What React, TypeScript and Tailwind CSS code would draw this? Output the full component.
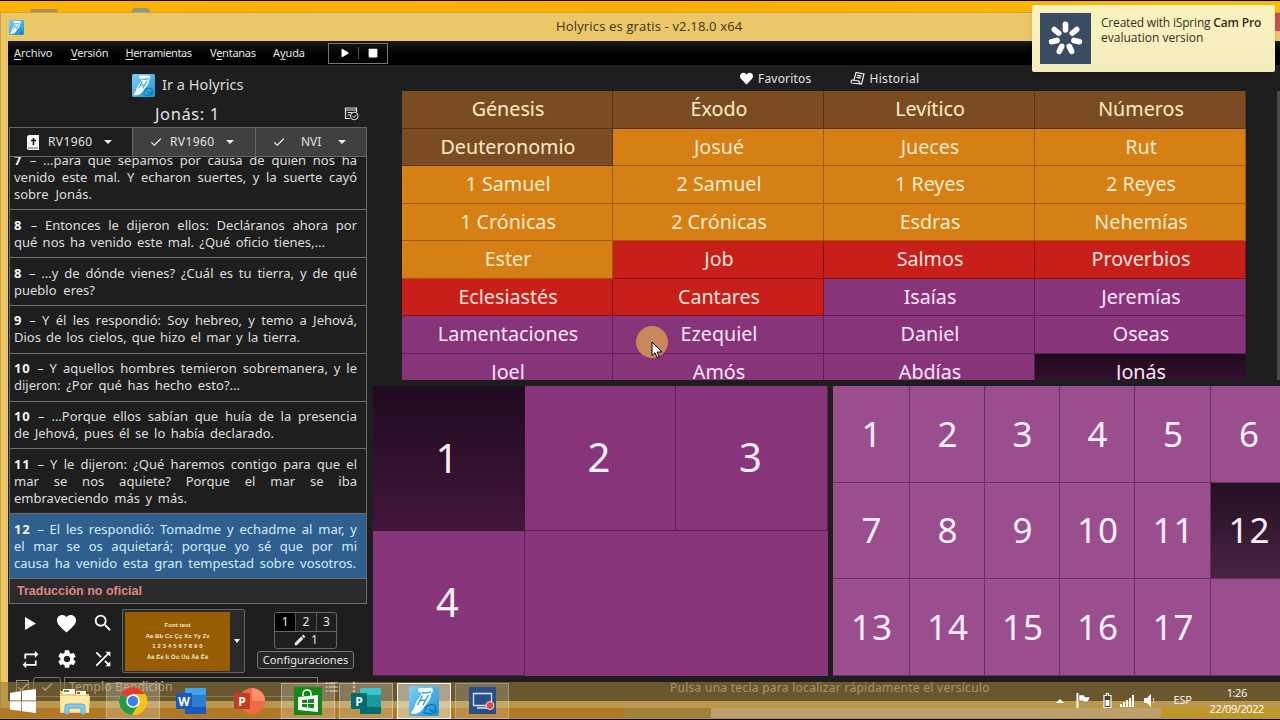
import type { ReactNode } from "react";
import { FaHeart, FaPlay, FaStop } from "react-icons/fa";
import {
  MdCheck,
  MdEdit,
  MdFavorite,
  MdFormatListBulleted,
  MdMoreVert,
  MdRepeat,
  MdSearch,
  MdSettings,
  MdShuffle,
} from "react-icons/md";

type Line = [text: string, width: number];
type Verse = { n: string; lines: Line[]; active?: boolean };

const verses: Verse[] = [
  {
    n: "7",
    lines: [
      ["– ...para que sepamos por causa de quien nos ha", 343],
      ["venido este mal. Y echaron suertes, y la suerte cayó", 343],
      ["sobre Jonás.", 78],
    ],
  },
  {
    n: "8",
    lines: [
      ["– Entonces le dijeron ellos: Decláranos ahora por", 343],
      ["qué nos ha venido este mal. ¿Qué oficio tienes,...", 311],
    ],
  },
  {
    n: "8",
    lines: [
      ["– ...y de dónde vienes? ¿Cuál es tu tierra, y de qué", 343],
      ["pueblo eres?", 81],
    ],
  },
  {
    n: "9",
    lines: [
      ["– Y él les respondió: Soy hebreo, y temo a Jehová,", 343],
      ["Dios de los cielos, que hizo el mar y la tierra.", 286],
    ],
  },
  {
    n: "10",
    lines: [
      ["– Y aquellos hombres temieron sobremanera, y le", 343],
      ["dijeron: ¿Por qué has hecho esto?...", 226],
    ],
  },
  {
    n: "10",
    lines: [
      ["– ...Porque ellos sabían que huía de la presencia", 343],
      ["de Jehová, pues él se lo había declarado.", 260],
    ],
  },
  {
    n: "11",
    lines: [
      ["– Y le dijeron: ¿Qué haremos contigo para que el", 343],
      ["mar se nos aquiete? Porque el mar se iba", 343],
      ["embraveciendo más y más.", 173],
    ],
  },
  {
    n: "12",
    active: true,
    lines: [
      ["– El les respondió: Tomadme y echadme al mar, y", 343],
      ["el mar se os aquietará; porque yo sé que por mi", 343],
      ["causa ha venido esta gran tempestad sobre vosotros.", 342],
    ],
  },
];

const groups = {
  law: "bg-[#7b4c24] border-[#56320f] text-[#fdeccb]",
  history: "bg-[#d67f15] border-[#9c5a0b] text-[#fdeccb]",
  poetry: "bg-[#c81f1a] border-[#8a120e] text-[#ffe3dc]",
  prophets: "bg-[#88347a] border-[#5d1d55] text-[#fbe6f8]",
  current: "bg-linear-to-b from-[#1f0a1e] to-[#3a1334] border-[#2a0e26] text-[#fbe6f8]",
};

const books: [string, keyof typeof groups][] = [
  ["Génesis", "law"],
  ["Éxodo", "law"],
  ["Levítico", "law"],
  ["Números", "law"],
  ["Deuteronomio", "law"],
  ["Josué", "history"],
  ["Jueces", "history"],
  ["Rut", "history"],
  ["1 Samuel", "history"],
  ["2 Samuel", "history"],
  ["1 Reyes", "history"],
  ["2 Reyes", "history"],
  ["1 Crónicas", "history"],
  ["2 Crónicas", "history"],
  ["Esdras", "history"],
  ["Nehemías", "history"],
  ["Ester", "history"],
  ["Job", "poetry"],
  ["Salmos", "poetry"],
  ["Proverbios", "poetry"],
  ["Eclesiastés", "poetry"],
  ["Cantares", "poetry"],
  ["Isaías", "prophets"],
  ["Jeremías", "prophets"],
  ["Lamentaciones", "prophets"],
  ["Ezequiel", "prophets"],
  ["Daniel", "prophets"],
  ["Oseas", "prophets"],
  ["Joel", "prophets"],
  ["Amós", "prophets"],
  ["Abdías", "prophets"],
  ["Jonás", "current"],
];

function Logo({ className }: { className: string }) {
  return (
    <svg viewBox="0 0 30 30" className={className}>
      <defs>
        <linearGradient id="sky" x1="0" y1="0" x2="1" y2="1">
          <stop offset="0" stopColor="#7fd0f4" />
          <stop offset="1" stopColor="#1a93d6" />
        </linearGradient>
      </defs>
      <rect width="30" height="30" rx="2" fill="url(#sky)" />
      <path
        d="M9 3C11 1 15 3 22 1.500C25 3 24 6 22 8C22 14 18 17 15 21C13 25 9 29 2 27.500C2 25 4.500 24 5.500 21C6.500 15 11 12 13 6.500C11 7 9 6 9 3Z"
        fill="#f6fbfe"
      />
      <path
        d="M13.500 9.500L8.500 19M19.500 9L14 19M11 14.500L17 14M13 6.500C16 7.500 19 6.500 22 6"
        fill="none"
        stroke="#3d9bd0"
        strokeWidth="1.4"
      />
      <path
        d="M16 25C16 18 26 16.500 26.500 21.500C26.500 26 20.500 26 21 22.500M14 26C20 29 26 28 28 24"
        fill="none"
        stroke="#0f76ba"
        strokeWidth="1.4"
      />
    </svg>
  );
}

function Caret() {
  return (
    <svg viewBox="0 0 8 4" className="h-1 w-2">
      <path d="M0 0h8L4 4z" fill="#f2f2f2" />
    </svg>
  );
}

function MenuBar() {
  return (
    <div className="flex h-6 shrink-0 items-center bg-linear-to-b from-[#1a1a1a] to-black pl-[6px] text-[11px] text-[#e4e4e4]">
      <span className="w-[57px]">
        <u className="underline-offset-2">A</u>rchivo
      </span>
      <span className="w-[54.5px] tracking-[-0.2px]">
        <u className="underline-offset-2">V</u>ersión
      </span>
      <span className="w-[84.5px] tracking-[-0.4px]">
        <u className="underline-offset-2">H</u>erramientas
      </span>
      <span className="w-[63px] tracking-[-0.25px]">
        V<u className="underline-offset-2">e</u>ntanas
      </span>
      <span className="w-[55px] tracking-[-0.1px]">
        A<u className="underline-offset-2">y</u>uda
      </span>
      <div className="flex h-[21px] w-[60px] items-center justify-center border border-[#777]">
        <FaPlay className="ml-0.5 size-2 text-white" />
        <span className="mx-[9px] h-3 w-px bg-[#555]" />
        <FaStop className="size-2.5 text-white" />
      </div>
    </div>
  );
}

function VersionTabs() {
  return (
    <div className="flex h-[30px] shrink-0 border border-[#666] bg-[#404040] text-xs tracking-[0.4px] text-[#e2e2e2]">
      <div className="flex w-[122px] items-center bg-[#1e1e1e] pl-4">
        <svg viewBox="0 0 14 15" className="mr-2 h-[15px] w-3.5">
          <path d="M3 0h10v15H3C0 15 1 12 1 12V2C1 1 2 0 3 0z" fill="#f4f4f4" />
          <path d="M7.500 3v7M5 5.500h5" stroke="#111" strokeWidth="1.600" />
          <path d="M2 13h10" stroke="#666" />
        </svg>
        <span className="w-14">RV1960</span>
        <Caret />
      </div>
      <div className="flex w-[123px] items-center border-l border-[#666] pl-4">
        <MdCheck className="mr-[7px] size-[14px] text-white" />
        <span className="w-14">RV1960</span>
        <Caret />
      </div>
      <div className="flex flex-1 items-center border-l border-[#666] pl-4">
        <MdCheck className="mr-[15px] size-[14px] text-white" />
        <span className="w-[37px] tracking-normal">NVI</span>
        <Caret />
      </div>
    </div>
  );
}

function VerseRow({ n, lines, active }: Verse) {
  return (
    <div
      className={`border-b border-[#6c6c6c] px-1 pt-[6.3px] pb-[6.5px] text-[13px] leading-[17px] ${
        active ? "bg-[#2f5f8e] text-[#d5ebfb]" : "text-[#dedede]"
      }`}
    >
      {lines.map(([text, width], i) => (
        <div
          key={text}
          className="whitespace-nowrap [text-align-last:justify]"
          style={{ width }}
        >
          {i === 0 && <b className="font-bold tracking-[0.8px] text-[#f4f4f4]">{n} </b>}
          {text}
        </div>
      ))}
    </div>
  );
}

function FontPreview() {
  return (
    <div className="mt-px flex h-16 w-[123px] items-center rounded-xs border border-[#666] bg-[#2a2a2a] pl-0.5">
      <div className="flex h-[59px] w-[105px] flex-col items-center justify-center bg-[#985c02] font-['Liberation_Sans'] text-[6px] leading-[10.5px] font-bold tracking-[0.1px] whitespace-nowrap text-[#f7ead2]">
        <span>Font test</span>
        <span>Aa Bb Cc Çç Xx Yy Zz</span>
        <span>1 2 3 4 5 6 7 8 9 0</span>
        <span>Áá Éé Íí Óó Úú Ãã Êê</span>
      </div>
      <svg viewBox="0 0 6 4" className="ml-1 h-1 w-1.5">
        <path d="M0 0h6L3 4z" fill="#f2f2f2" />
      </svg>
    </div>
  );
}

function BottomControls() {
  return (
    <div className="flex h-[72px] shrink-0 pt-1 text-white">
      <div className="grid h-[70px] w-[113px] grid-cols-[42px_31px_41px] grid-rows-[30px_42px] place-items-center">
        <svg viewBox="0 0 11 13" className="h-[13px] w-[11px]">
          <path d="M0 0l11 6.500L0 13z" fill="#fff" />
        </svg>
        <MdFavorite className="size-[23px]" />
        <MdSearch className="size-[22px]" />
        <MdRepeat className="size-[21px]" />
        <MdSettings className="size-[22px]" />
        <MdShuffle className="size-[22px]" />
      </div>
      <FontPreview />
      <div className="ml-3 flex w-[97px] flex-col items-center pt-1 text-xs text-[#e8e8e8]">
        <div className="grid h-[37px] w-[63px] grid-cols-3 grid-rows-2 overflow-hidden rounded-[3px] border border-[#666] text-center leading-[18px]">
          <span className="bg-black">1</span>
          <span className="border-l border-[#555]">2</span>
          <span className="border-l border-[#555]">3</span>
          <span className="col-span-3 flex items-center justify-center gap-1 border-t border-[#666]">
            <MdEdit className="size-3.5" />1
          </span>
        </div>
        <div className="mt-[2px] flex h-[18px] w-[97px] items-center justify-center rounded-[3px] border border-[#777] bg-[#262626] text-[11px] tracking-[0.1px]">
          Configuraciones
        </div>
      </div>
    </div>
  );
}

function Sidebar() {
  return (
    <div className="flex w-[358px] shrink-0 flex-col">
      <div className="flex h-[38px] shrink-0 items-center pt-0.5 pl-[123px] text-[14.5px] tracking-[0.05px] text-[#dcdcdc]">
        <Logo className="mr-[7px] size-[23px]" />
        Ir a Holyrics
      </div>
      <div className="flex h-6 shrink-0 items-center justify-between pr-2 pb-0.5 pl-[146px] text-[16.5px] tracking-[0.6px] text-[#e4e4e4]">
        <span>Jonás: 1</span>
        <svg viewBox="0 0 15 14" className="h-3.5 w-[15px]" fill="none" stroke="#e4e4e4">
          <path d="M6 11.500H1.500V1h11v4M1.500 3h11M3.500 5.500h5M3.500 8h3" strokeWidth="1.200" />
          <circle cx="10.300" cy="9" r="3.800" fill="#1e1e1e" />
          <path d="M8.500 9l1.400 1.400L12.300 8" />
        </svg>
      </div>
      <VersionTabs />
      <div className="flex h-[422px] shrink-0 flex-col justify-end overflow-hidden border-x border-[#6c6c6c]">
        {verses.map((v, i) => (
          <VerseRow key={i} {...v} />
        ))}
      </div>
      <div className="flex h-[25px] shrink-0 items-center border border-t-0 border-[#6c6c6c] bg-[#2b2b2b] pl-[7px] font-['Liberation_Sans'] text-[12.5px] font-bold text-[#e08488]">
        Traducción no oficial
      </div>
      <BottomControls />
      <div className="flex h-[22px] shrink-0 items-center gap-1 pb-px text-[12px] text-white">
        <div className="ml-[7px] flex size-[13px] items-center justify-center border border-[#999]">
          <MdCheck className="size-3.5 shrink-0" />
        </div>
        <div className="flex h-5 w-7 items-center justify-center rounded-t-[3px] border border-[#777]">
          <MdCheck className="size-3.5" />
        </div>
        <div className="-ml-px flex h-5 w-[254px] items-center border border-[#777] pl-1 tracking-[0.2px] text-[#ccc]">
          Templo Bendición
        </div>
        <MdFormatListBulleted className="ml-0.5 size-4" />
        <MdMoreVert className="ml-0.5 size-4" />
      </div>
    </div>
  );
}

function BooksGrid() {
  return (
    <div className="flex justify-between pl-[29px]">
      <div className="grid h-[289px] w-[845px] shrink-0 grid-cols-[211px_211px_211px_211px] auto-rows-[37.5px] overflow-hidden text-[19.7px]">
        {books.map(([name, group]) => (
          <div
            key={name}
            className={`flex items-center justify-center border-r border-b pl-0.5 leading-none ${groups[group]}`}
          >
            {name}
          </div>
        ))}
      </div>
      <div className="mr-0.5 w-[3px] bg-[#4a4a4a]" />
    </div>
  );
}

function ChapterGrid() {
  return (
    <div className="grid h-[290px] w-[455px] grid-cols-[152px_151px_152px] grid-rows-[145px_145px] text-[40px] text-[#fdeefb]">
      <div className="flex items-center justify-center bg-linear-to-b from-[#1f0a1e] to-[#43163c] pr-1 pb-0.5">1</div>
      {["2", "3", "4"].map((n) => (
        <div
          key={n}
          className="flex items-center justify-center border-r border-b border-[#5d1d55] bg-[#88347a] pr-0.5 pb-0.5"
        >
          {n}
        </div>
      ))}
      <div className="col-span-2 bg-[#88347a]" />
    </div>
  );
}

function VerseGrid() {
  return (
    <div className="grid h-[290px] w-[447px] grid-cols-[77px_75px_75px_75px_76px_76px] grid-rows-[97px_96px_97px] overflow-hidden text-[35px] tracking-[1px] text-[#fdeefb]">
      {Array.from({ length: 18 }, (_, i) => (
        <div
          key={i}
          className={`flex items-center justify-center border-r border-b border-[#6f2b66] pl-0.5 ${
            i === 11 ? "bg-linear-to-b from-[#231021] to-[#4a2343]" : "bg-[#9a4e8e]"
          }`}
        >
          {i < 17 ? i + 1 : ""}
        </div>
      ))}
    </div>
  );
}

function Selector() {
  return (
    <div className="ml-[6px] flex min-w-0 flex-1 flex-col">
      <div className="flex h-[26px] shrink-0 items-center pt-px pl-[367px] text-xs tracking-[0.3px] text-[#e4e4e4]">
        <FaHeart className="mr-[5px] size-[13px] text-white" />
        <span className="mr-[38px] tracking-[0.2px]">Favoritos</span>
        <svg viewBox="0 0 15 15" className="mr-[5px] size-[15px]" fill="none" stroke="#eee" strokeWidth="1.200">
          <path d="M4 9L6 1.500L14 3l-2.500 10L2 12c-1.500-.5-1-2.500 0-3l7 1c0 1.500.5 3 2.500 3M7 4.300l4.500.8M6.500 6.400l4.500.8" />
        </svg>
        <span>Historial</span>
      </div>
      <BooksGrid />
      <div className="mt-[6px] flex gap-[5px]">
        <ChapterGrid />
        <VerseGrid />
      </div>
      <div className="pt-1 pl-[297px] text-xs tracking-[0.27px] whitespace-nowrap text-[#bbb]">
        Pulsa una tecla para localizar rápidamente el versículo
      </div>
    </div>
  );
}

function TaskButton({ children, className = "" }: { children: ReactNode; className?: string }) {
  return (
    <div className={`flex h-9 w-[54px] shrink-0 items-center justify-center border ${className}`}>
      {children}
    </div>
  );
}

function OfficeIcon({ letter, color }: { letter: string; color: "word" | "point" | "pub" }) {
  const shades = {
    word: ["#2b7cd3", "#41a5ee", "#185abd"],
    point: ["#ed6c47", "#ff8f6b", "#c43e1c"],
    pub: ["#1a9ba1", "#38c7cc", "#036c70"],
  }[color];
  return (
    <svg viewBox="0 0 32 28" className="h-7 w-8">
      {color === "point" ? (
        <>
          <circle cx="19" cy="14" r="13" fill={shades[0]} />
          <path d="M19 1a13 13 0 0 1 13 13H19z" fill={shades[1]} />
        </>
      ) : (
        <>
          <path d="M10 1h21v26H10z" fill={shades[0]} />
          <path d="M10 1h21v7H10z" fill={shades[1]} />
          <path d="M10 20h21v7H10z" fill={shades[2]} />
        </>
      )}
      <rect x="1" y="6" width="16" height="16" rx="1" fill={shades[2]} />
      <text x="9" y="18.500" textAnchor="middle" fontSize="12" fontWeight="bold" fill="#fff">
        {letter}
      </text>
    </svg>
  );
}

function Tray() {
  return (
    <div className="ml-auto flex items-center text-white">
      <svg viewBox="0 0 8 4" className="h-1 w-2">
        <path d="M0 4h8L4 0z" fill="#fff" />
      </svg>
      <svg viewBox="0 0 16 15" className="ml-[11px] h-[15px] w-4">
        <path d="M2.500 0v15" stroke="#fff" strokeWidth="2" />
        <path d="M4 2h5l1 2h5l-2 5H9L8 8H4z" fill="#fff" stroke="#554" strokeWidth=".5" />
      </svg>
      <svg viewBox="0 0 9 15" className="ml-3 h-[15px] w-[9px]">
        <path d="M3.500.5h2v2h2.500v12H1v-12h2.500z" fill="#4b4126" stroke="#fff" strokeWidth="1.200" />
        <path d="M2.500 7h4v6h-4z" fill="#fff" />
      </svg>
      <svg viewBox="0 0 15 12" className="ml-2 h-3 w-[15px]" fill="#fff">
        <path d="M0 9h2v3H0zM3 7h2v5H3zM6 5h2v7H6zM9 3h2v9H9zM12 0h2v12h-2z" />
      </svg>
      <svg viewBox="0 0 14 13" className="ml-[9px] h-[13px] w-3.5">
        <path d="M0 4h3l4-4v13L3 9H0z" fill="#fff" />
        <path d="M9 4c1 1 1 4 0 5" fill="none" stroke="#ddd" />
      </svg>
      <span className="ml-4 w-[36px] text-[11px] tracking-[-0.3px]">ESP</span>
      <span className="mr-4 text-center text-[11px] leading-4 tracking-[-0.4px]">
        1:26
        <br />
        22/09/2022
      </span>
    </div>
  );
}

function Taskbar() {
  return (
    <div className="absolute inset-x-0 top-[681px] flex h-[37px] items-center bg-[#9a7b3b]/62 font-['Open_Sans','Noto_Sans',sans-serif]">
      <svg viewBox="0 0 26 24" className="ml-[10px] h-6 w-[26px]" fill="#fff">
        <path d="M0 4l11-2v9.500H0zM12 1.800L26 0v11.500H12zM0 12.500h11V22L0 20.500zM12 12.500h14V24l-14-1.800z" />
      </svg>
      <svg viewBox="0 0 32 28" className="ml-[23px] h-7 w-8">
        <path d="M1 4h9l2 3h18v19H1z" fill="#e9cf7c" />
        <path d="M4 2h12v5H4z" fill="#f7f7ee" />
        <path d="M5 3h5v2H5z" fill="#3f9b54" />
        <path d="M17 4h10v4H17z" fill="#faf6e0" />
        <path d="M18 5h3v2h-3z" fill="#c94a3c" />
        <path d="M1 9h30l-1 16H2z" fill="#fbe9a5" />
        <path d="M6 27V20q0-3 3-3h14q3 0 3 3v7h-4v-6H10v6z" fill="#8ccbe8" stroke="#5ba6cd" />
      </svg>
      <TaskButton className="ml-[15px] border-white/25 bg-white/20">
        <svg viewBox="0 0 28 28" className="size-7">
          <circle cx="14" cy="14" r="14" fill="#fbc116" />
          <path d="M14 14L1.900 7A14 14 0 0 1 26.100 7z" fill="#e33b2e" />
          <path d="M14 14L1.900 7A14 14 0 0 0 13 28L20 17z" fill="#249a46" />
          <path d="M14 7h12.100A14 14 0 0 1 13 28L20 17z" fill="#fbc116" />
          <circle cx="14" cy="14" r="6.800" fill="#fff" />
          <circle cx="14" cy="14" r="5.200" fill="#3f7fe8" />
        </svg>
      </TaskButton>
      <TaskButton className="ml-1 border-transparent">
        <OfficeIcon letter="W" color="word" />
      </TaskButton>
      <TaskButton className="ml-1 border-transparent">
        <OfficeIcon letter="P" color="point" />
      </TaskButton>
      <TaskButton className="ml-[5px] border-white/35 bg-white/20">
        <svg viewBox="0 0 28 28" className="size-7">
          <path d="M0 0h28v28H0z" fill="#0f8a15" />
          <path d="M4 10l20-2v17L4 23z" fill="#fff" />
          <path d="M9 9V7q0-4 4-4t4 4v2" fill="none" stroke="#fff" strokeWidth="1.500" />
          <path d="M8 13l5-.5V16H8zM14 12.400l6-.6V16h-6zM8 17h5v3.500L8 20zM14 17h6v4.200l-6-.6z" fill="#0f8a15" />
        </svg>
      </TaskButton>
      <TaskButton className="ml-1 border-white/35 bg-white/20">
        <OfficeIcon letter="P" color="pub" />
      </TaskButton>
      <TaskButton className="ml-1 border-[#fff8dd] bg-white/45">
        <Logo className="size-[30px]" />
      </TaskButton>
      <TaskButton className="ml-1 border-white/25 bg-white/15">
        <svg viewBox="0 0 27 27" className="size-[27px]">
          <path d="M0 0h27v27H0z" fill="#284f88" />
          <path d="M4.500 6.500h18v12h-18zM8 21h10" fill="none" stroke="#dbe7f5" strokeWidth="1.300" />
          <circle cx="21" cy="18.500" r="4" fill="#e04a4a" stroke="#f5dede" />
        </svg>
      </TaskButton>
      <Tray />
    </div>
  );
}

function Toast() {
  return (
    <div className="absolute top-[4px] left-[1032px] flex h-[67px] w-[243px] rounded-xs bg-linear-to-b from-[#fcf3bd] to-[#f2ebbd] pt-2 pl-2 font-['Open_Sans','Noto_Sans',sans-serif] text-[#33301f] shadow-md">
      <svg viewBox="-25 -25 50 50" className="size-[51px] bg-[#394c62]" stroke="#fff" strokeWidth="5.500" strokeLinecap="round">
        {[0, 51.4, 102.8, 154.3, 205.7, 257.1, 308.6].map((deg) => (
          <path key={deg} d="M0-14V-8.500" transform={`rotate(${deg})`} />
        ))}
      </svg>
      <div className="ml-2.5 pt-0.5 text-xs leading-[15px] tracking-[-0.19px] whitespace-nowrap">
        Created with iSpring <span className="font-semibold">Cam Pro</span>
        <br />
        <span className="tracking-normal">evaluation version</span>
      </div>
    </div>
  );
}

export default function App() {
  return (
    <div className="relative h-[720px] w-[1280px] overflow-hidden border-y border-black bg-linear-to-r from-[#fdb400] via-[#f9ac00] to-[#fbbc00] font-['Noto_Sans',sans-serif]">
      {/* desktop icons peeking over the window */}
      <div className="flex h-[11px] items-end pl-[30px]">
        <span className="h-[3px] w-7 rounded-t-full bg-[#a8905a]" />
        <span className="ml-[74px] h-[4px] w-[18px] rounded-t-full bg-[#8d9a84]" />
      </div>
      <div className="flex h-[696px] w-[1282px] flex-col border-t border-l border-[#d0a23e] bg-[#ecc767]">
        <div className="flex h-7 shrink-0 items-center pl-[8px] text-[13px] text-[#3d3218]">
          <Logo className="size-[15px]" />
          <span className="flex-1 pb-px pl-[532px] font-['Open_Sans','Noto_Sans',sans-serif] tracking-[0.16px]">
            Holyrics es gratis - v2.18.0 x64
          </span>
          <span className="mr-0.5 h-[18px] w-1.5 self-start bg-[#c75050]" />
        </div>
        <div className="ml-[7px] flex h-[660px] shrink-0 flex-col overflow-hidden bg-[#1e1e1e]">
          <MenuBar />
          <div className="flex pl-px">
            <Sidebar />
            <Selector />
          </div>
        </div>
      </div>
      <div className="flex h-2.5">
        <span className="w-[625px] bg-[#d47804]" />
        <span className="w-[86px] bg-[#ae8b30]" />
        <span className="w-[450px] bg-[#f6ddbb]" />
        <span className="flex-1 bg-[#ffc20e]" />
      </div>

      <Taskbar />
      <Toast />

      {/* pointer with the click highlight */}
      <div className="absolute top-[325px] left-[636px] size-8 rounded-full bg-[#c8875a]" />
      <svg viewBox="0 0 12 18" className="absolute top-[340px] left-[651px] h-[18px] w-3">
        <path d="M1 1v13.500l3-2.800 2.200 5 2-.9-2.100-4.800H11z" fill="#fff" stroke="#000" />
      </svg>
    </div>
  );
}
